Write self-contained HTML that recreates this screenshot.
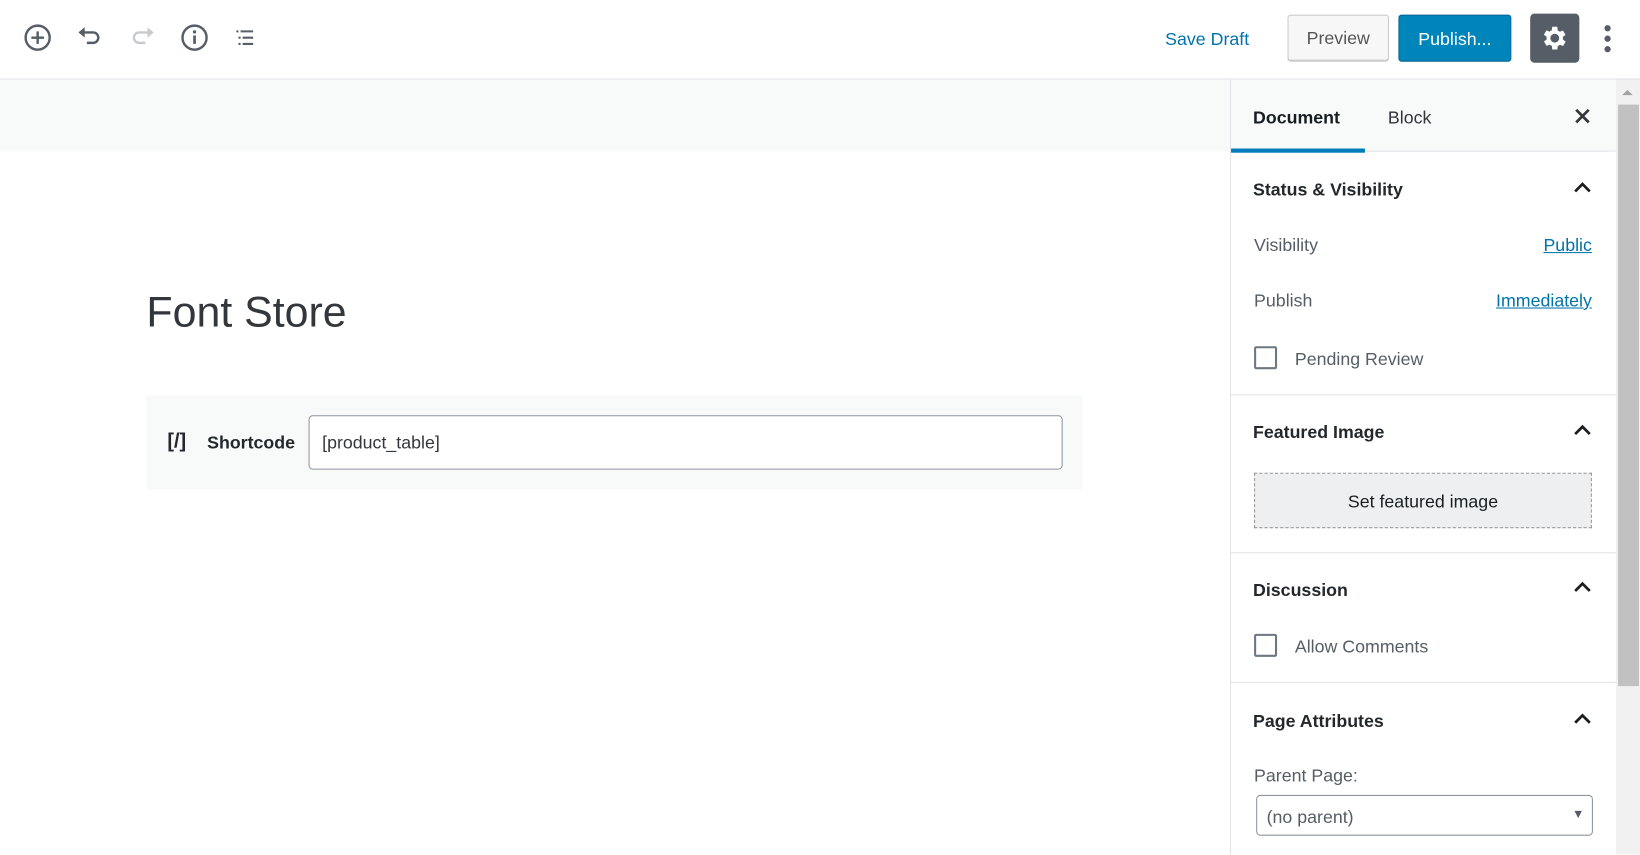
<!DOCTYPE html>
<html><head><meta charset="utf-8"><style>
*{box-sizing:border-box;margin:0;padding:0}
html,body{width:1640px;height:854px;overflow:hidden;background:#fff}
#w{position:absolute;left:0;top:0;width:1568px;height:817px;transform:scale(1.04592);transform-origin:0 0;font-family:"Liberation Sans",sans-serif;color:#1e1e1e}
.a{position:absolute}
.ico{position:absolute;top:22px}
.h{font-weight:bold;font-size:17px;color:#23282d}
.lbl{font-size:17px;color:#555d66}
.lnk{font-size:17px;color:#0073aa;text-decoration:underline}
.cb{position:absolute;width:22px;height:22px;border:2px solid #6c7781;border-radius:2px}
.sep{position:absolute;left:1177px;width:368px;height:1px;background:#e2e4e7}
.chev{position:absolute;left:1503px}
</style></head><body><div id="w">
<div class="a" style="left:0;top:75px;width:1568px;height:1px;background:#e2e4e7"></div>
<svg class="ico" style="left:22px" width="28" height="28" viewBox="0 0 28 28"><circle cx="14" cy="14" r="11.5" fill="none" stroke="#555d66" stroke-width="2.3"/><path d="M14 8v12M8 14h12" stroke="#555d66" stroke-width="2.3"/></svg>
<svg class="ico" style="left:72px" width="28" height="28" viewBox="0 0 28 28"><path d="M7 9h10a5 5 0 0 1 0 10h-6" fill="none" stroke="#555d66" stroke-width="2.3"/><path d="M3 9l6-5v10z" fill="#555d66"/></svg>
<svg class="ico" style="left:122px" width="28" height="28" viewBox="0 0 28 28"><path d="M21 9H11a5 5 0 0 0 0 10h6" fill="none" stroke="#c8cbce" stroke-width="2.3"/><path d="M25 9l-6-5v10z" fill="#c8cbce"/></svg>
<svg class="ico" style="left:172px" width="28" height="28" viewBox="0 0 28 28"><circle cx="14" cy="14" r="11.5" fill="none" stroke="#555d66" stroke-width="2.3"/><path d="M14 12v8" stroke="#555d66" stroke-width="2.6"/><circle cx="14" cy="8.5" r="1.6" fill="#555d66"/></svg>
<svg class="ico" style="left:222px" width="28" height="28" viewBox="0 0 28 28"><path d="M8 8h12M10 14h10M10 20h10" stroke="#555d66" stroke-width="2"/><path d="M4 8h2M6 14h2M6 20h2" stroke="#555d66" stroke-width="2"/></svg>
<div class="a" style="left:1114px;top:28px;font-size:17px;color:#0073aa">Save Draft</div>
<div class="a" style="left:1231px;top:14px;width:97px;height:44px;border:1px solid #ccc;border-radius:3px;background:#f7f7f7;box-shadow:0 1px 0 #ccc;font-size:17px;color:#555;text-align:center;line-height:44px">Preview</div>
<div class="a" style="left:1337px;top:14px;width:108px;height:45px;border:1px solid #006799;border-radius:3px;background:#0085ba;font-size:17px;color:#fff;text-align:center;line-height:45px">Publish...</div>
<div class="a" style="left:1463px;top:13px;width:47px;height:47px;border-radius:4px;background:#555d66"></div>
<svg class="a" style="left:1472px;top:22px" width="29" height="29" viewBox="0 0 24 24"><path fill="#fff" d="M19.4 13a7.5 7.5 0 0 0 0-2l2.1-1.6-2-3.5-2.5 1a7.3 7.3 0 0 0-1.7-1L15 3h-4l-.4 2.8a7.3 7.3 0 0 0-1.7 1l-2.5-1-2 3.5L6.6 11a7.5 7.5 0 0 0 0 2l-2.1 1.6 2 3.5 2.5-1a7.3 7.3 0 0 0 1.7 1L11 21h4l.4-2.8a7.3 7.3 0 0 0 1.7-1l2.5 1 2-3.5zM13 15.5a3.5 3.5 0 1 1 0-7 3.5 3.5 0 0 1 0 7z" transform="translate(-1 0)"/></svg>
<div class="a" style="left:1534px;top:24px;width:6px;height:6px;border-radius:3px;background:#555d66"></div>
<div class="a" style="left:1534px;top:34px;width:6px;height:6px;border-radius:3px;background:#555d66"></div>
<div class="a" style="left:1534px;top:44px;width:6px;height:6px;border-radius:3px;background:#555d66"></div>
<div class="a" style="left:0;top:76px;width:1177px;height:69px;background:#f8f9f9"></div>
<div class="a" style="left:140px;top:275px;font-size:41px;color:#32373c">Font Store</div>
<div class="a" style="left:140px;top:378px;width:895px;height:90px;background:#f8f9f9"></div>
<div class="a" style="left:160px;top:412px;font-size:19px;font-weight:bold;color:#23282d">[/]</div>
<div class="a" style="left:198px;top:414px;font-size:17px;font-weight:bold;color:#23282d">Shortcode</div>
<div class="a" style="left:295px;top:397px;width:721px;height:52px;border:1px solid #8d96a0;border-radius:4px;background:#fff;font-size:17px;color:#32373c;padding:16px 12px">[product_table]</div>
<div class="a" style="left:1176px;top:76px;width:1px;height:741px;background:#e2e4e7"></div>
<div class="a" style="left:1177px;top:76px;width:368px;height:69px;background:#f8f9f9;border-bottom:1px solid #e2e4e7"></div>
<div class="a" style="left:1177px;top:142px;width:128px;height:4px;background:#007cba"></div>
<div class="a" style="left:1198px;top:103px;font-size:17px;font-weight:bold;color:#191e23">Document</div>
<div class="a" style="left:1327px;top:103px;font-size:17px;color:#32373c">Block</div>
<svg class="a" style="left:1505px;top:103px" width="16" height="16" viewBox="0 0 16 16"><path d="M2 2l12 12M14 2L2 14" stroke="#32373c" stroke-width="2.6"/></svg>
<svg class="chev" style="top:172px" width="20" height="14" viewBox="0 0 20 14"><path d="M3 11l7-7 7 7" fill="none" stroke="#191e23" stroke-width="2.6"/></svg>
<div class="a h" style="left:1198px;top:172px">Status &amp; Visibility</div>
<div class="a lbl" style="left:1199px;top:225px">Visibility</div>
<div class="a lnk" style="right:46px;top:225px">Public</div>
<div class="a lbl" style="left:1199px;top:278px">Publish</div>
<div class="a lnk" style="right:46px;top:278px">Immediately</div>
<div class="cb" style="left:1199px;top:331px"></div>
<div class="a lbl" style="left:1238px;top:334px">Pending Review</div>
<div class="sep" style="top:377px"></div>
<div class="a h" style="left:1198px;top:404px">Featured Image</div>
<svg class="chev" style="top:404px" width="20" height="14" viewBox="0 0 20 14"><path d="M3 11l7-7 7 7" fill="none" stroke="#191e23" stroke-width="2.6"/></svg>
<div class="a" style="left:1199px;top:452px;width:323px;height:53px;border:1px dashed #999;background:#edeff0;font-size:17px;color:#191e23;text-align:center;line-height:53px">Set featured image</div>
<div class="sep" style="top:528px"></div>
<div class="a h" style="left:1198px;top:555px">Discussion</div>
<svg class="chev" style="top:554px" width="20" height="14" viewBox="0 0 20 14"><path d="M3 11l7-7 7 7" fill="none" stroke="#191e23" stroke-width="2.6"/></svg>
<div class="cb" style="left:1199px;top:606px"></div>
<div class="a lbl" style="left:1238px;top:609px">Allow Comments</div>
<div class="sep" style="top:652px"></div>
<div class="a h" style="left:1198px;top:680px">Page Attributes</div>
<svg class="chev" style="top:680px" width="20" height="14" viewBox="0 0 20 14"><path d="M3 11l7-7 7 7" fill="none" stroke="#191e23" stroke-width="2.6"/></svg>
<div class="a lbl" style="left:1199px;top:732px">Parent Page:</div>
<div class="a" style="left:1201px;top:760px;width:322px;height:39px;border:1px solid #8d96a0;border-radius:4px;font-size:17px;color:#555d66;padding:11px 9px">(no parent)</div>
<div class="a" style="left:1503px;top:771px;font-size:12px;color:#555d66">▼</div>
<div class="a" style="left:1545px;top:76px;width:23px;height:741px;background:#f1f1f1"></div>
<div class="a" style="left:1547px;top:100px;width:20px;height:556px;background:#c1c1c1"></div>
<svg class="a" style="left:1550px;top:84px" width="12" height="8" viewBox="0 0 12 8"><path d="M1 7l5-5 5 5z" fill="#a3a3a3"/></svg>
</div></body></html>
